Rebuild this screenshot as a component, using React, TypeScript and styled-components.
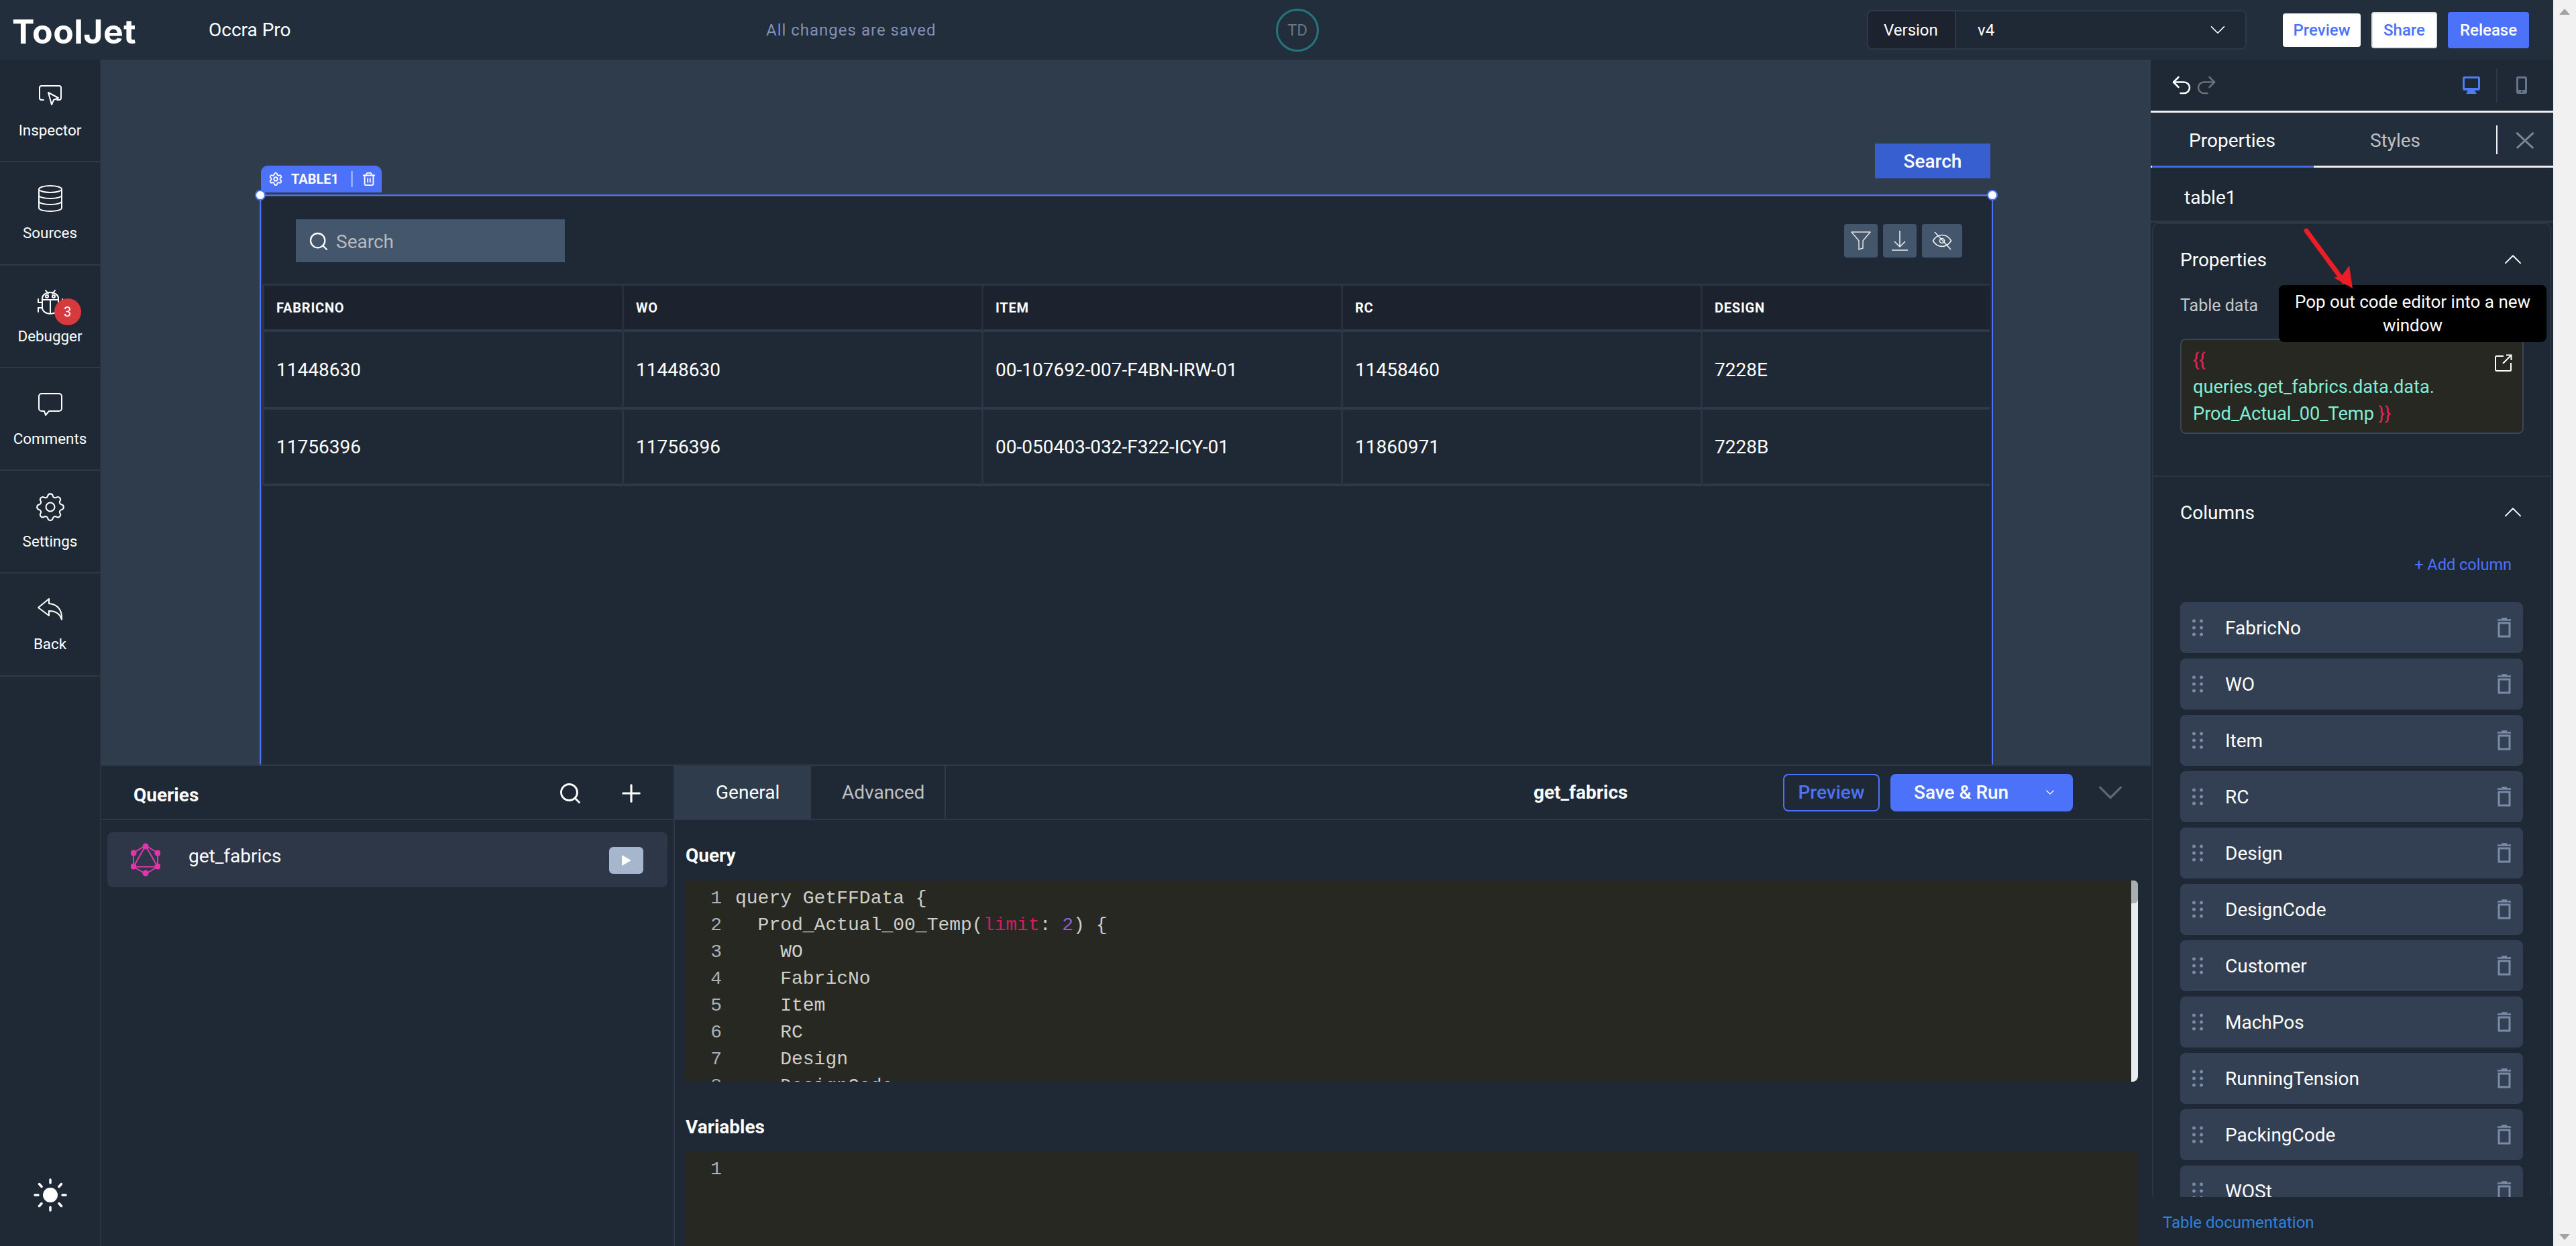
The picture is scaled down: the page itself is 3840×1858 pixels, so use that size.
import React from "react";
import styled, { createGlobalStyle } from "styled-components";
import { Plus, Redo2, Search as SearchIcon, Settings, Trash2, Undo2 } from "lucide-react";

const GlobalStyle = createGlobalStyle`
  html, body {
    margin: 0;
    padding: 0;
    background: #f1f1f1;
  }
  * {
    box-sizing: border-box;
  }
`;

const COLUMNS = ["FabricNo", "WO", "Item", "RC", "Design"];
const ROWS = [
  ["11448630", "11448630", "00-107692-007-F4BN-IRW-01", "11458460", "7228E"],
  ["11756396", "11756396", "00-050403-032-F322-ICY-01", "11860971", "7228B"],
];
const COLUMN_ITEMS = [
  "FabricNo",
  "WO",
  "Item",
  "RC",
  "Design",
  "DesignCode",
  "Customer",
  "MachPos",
  "RunningTension",
  "PackingCode",
  "WOSt",
];

const InspectorIcon = () => (
  <svg width="36" height="34" viewBox="0 0 36 34" fill="none" stroke="#fff" strokeWidth="2" strokeLinejoin="round" strokeLinecap="round">
    <path d="M8 23H5a3 3 0 0 1-3-3V5a3 3 0 0 1 3-3h26a3 3 0 0 1 3 3v15a3 3 0 0 1-3 3h-3" />
    <path d="M15 12l15 8-7 3-3 7z" fill="#1f2936" />
  </svg>
);

const SourcesIcon = () => (
  <svg width="38" height="42" viewBox="0 0 38 42" fill="none" stroke="#fff" strokeWidth="2">
    <ellipse cx="19" cy="7" rx="17" ry="5" />
    <path d="M2 7v28c0 3 8 5 17 5s17-2 17-5V7" />
    <path d="M2 16c0 3 8 5 17 5s17-2 17-5M2 25c0 3 8 5 17 5s17-2 17-5" />
  </svg>
);

const BugIcon = () => (
  <svg width="38" height="42" viewBox="0 0 38 42" fill="none" stroke="#fff" strokeWidth="2" strokeLinecap="round">
    <path d="M7 16a12 9 0 0 1 24 0v14a12 9 0 0 1-24 0z" />
    <path d="M7 18h24M19 18v20M12 4l4 5M26 4l-4 5M7 22H1v-5M31 22h6v-5M7 30H1v6M31 30h6v6" />
    <circle cx="14" cy="13" r="2" />
    <circle cx="24" cy="13" r="2" />
  </svg>
);

const CommentIcon = () => (
  <svg width="38" height="36" viewBox="0 0 38 36" fill="none" stroke="#fff" strokeWidth="2" strokeLinejoin="round">
    <path d="M6 2h26a4 4 0 0 1 4 4v18a4 4 0 0 1-4 4H17l-5 6-2-6H6a4 4 0 0 1-4-4V6a4 4 0 0 1 4-4z" />
  </svg>
);

const GearIcon = () => (
  <svg width="52" height="52" viewBox="0 0 24 24" fill="none" stroke="#fff" strokeWidth="0.95" strokeLinejoin="round">
    <path d="M10.300 4.300c.4-1.800 3-1.800 3.400 0a1.700 1.700 0 0 0 2.600 1.100c1.500-1 3.400.9 2.400 2.400a1.700 1.700 0 0 0 1.100 2.600c1.800.4 1.800 3 0 3.400a1.700 1.700 0 0 0-1.100 2.600c1 1.500-.9 3.400-2.400 2.400a1.700 1.700 0 0 0-2.600 1.100c-.4 1.800-3 1.800-3.400 0a1.700 1.700 0 0 0-2.600-1.100c-1.500 1-3.400-.9-2.400-2.400a1.700 1.700 0 0 0-1.100-2.600c-1.800-.4-1.800-3 0-3.400a1.700 1.700 0 0 0 1.100-2.600c-1-1.500.9-3.400 2.400-2.400a1.700 1.700 0 0 0 2.600-1.100z" />
    <circle cx="12" cy="12" r="3" />
  </svg>
);

const BackIcon = () => (
  <svg width="40" height="36" viewBox="0 0 40 36" fill="none" stroke="#fff" strokeWidth="2" strokeLinejoin="round">
    <path d="M18 2L2 15l16 12v-7c9 0 16 3 19 13 1-14-6-23-19-24z" />
  </svg>
);

const SunIcon = () => (
  <svg width="50" height="50" viewBox="0 0 50 50" fill="#fff" stroke="#fff" strokeWidth="3.500" strokeLinecap="round">
    <circle cx="25" cy="25" r="11" stroke="none" />
    <path d="M25 2v5M25 43v5M2 25h5M43 25h5M8.500 8.500l3.500 4M41.500 8.500l-3.500 4M8.500 41.500l3.500-4M41.500 41.500l-3.500-4" />
  </svg>
);

const FilterIcon = () => (
  <svg width="30" height="30" viewBox="0 0 30 30" fill="none" stroke="#e4e4e4" strokeWidth="1.500" strokeLinejoin="round">
    <path d="M1 2h28L18 15v11l-6 2V15z" />
  </svg>
);

const DownloadIcon = () => (
  <svg width="26" height="32" viewBox="0 0 26 32" fill="none" stroke="#f0f0f0" strokeWidth="1.500">
    <path d="M13 1v24M5 17l8 8 8-8M1 30h24" />
  </svg>
);

const EyeOffIcon = () => (
  <svg width="30" height="30" viewBox="0 0 30 30" fill="none" stroke="#f4f4f4" strokeWidth="1.500">
    <path d="M1.500 15C5 9 9.500 6.500 15 6.500S25 9 28.500 15C25 21 20.500 23.500 15 23.500S5 21 1.500 15z" />
    <circle cx="15" cy="15" r="3.500" />
    <path d="M4 2l24 26" />
  </svg>
);

const DesktopIcon = () => (
  <svg width="26" height="26" viewBox="0 0 26 26" fill="#4d7cf5">
    <path d="M3 0h20a3 3 0 0 1 3 3v15a3 3 0 0 1-3 3H3a3 3 0 0 1-3-3V3a3 3 0 0 1 3-3zm0 3v14h20V3z" fillRule="evenodd" />
    <path d="M8 21h10l3 5H5z" />
  </svg>
);

const PhoneIcon = () => (
  <svg width="16" height="26" viewBox="0 0 16 26" fill="#65758c">
    <path d="M3 0h10a3 3 0 0 1 3 3v20a3 3 0 0 1-3 3H3a3 3 0 0 1-3-3V3a3 3 0 0 1 3-3zm0 3v17h10V3zm5 18.500a1.300 1.300 0 1 0 0 2.600 1.300 1.300 0 0 0 0-2.600z" fillRule="evenodd" />
  </svg>
);

const GraphqlIcon = () => (
  <svg width="44" height="50" viewBox="0 0 44 50" fill="none" stroke="#e535ab" strokeWidth="2">
    <path d="M22 4L40 14.500v21L22 46 4 35.500v-21z" />
    <path d="M22 4L40 35.500H4z" />
    <g fill="#e535ab" stroke="none">
      <ellipse cx="22" cy="5" rx="4.500" ry="4.500" />
      <ellipse cx="40" cy="15" rx="4.500" ry="4.500" />
      <ellipse cx="40" cy="35" rx="4.500" ry="4.500" />
      <ellipse cx="22" cy="45" rx="4.500" ry="4.500" />
      <ellipse cx="4" cy="35" rx="4.500" ry="4.500" />
      <ellipse cx="4" cy="15" rx="4.500" ry="4.500" />
    </g>
  </svg>
);

const Chevron = ({ up, size = 28, color = "#fff", width = 2 }: { up?: boolean; size?: number; color?: string; width?: number }) => (
  <svg width={size} height={size * 0.6} viewBox="0 0 28 16" fill="none" stroke={color} strokeWidth={width} strokeLinecap="round" strokeLinejoin="round">
    <path d={up ? "M2 14L14 2l12 12" : "M2 2l12 12L26 2"} />
  </svg>
);

const ColumnTrash = () => (
  <svg width="20" height="30" viewBox="0 0 20 30" fill="none" stroke="#7a8ba6" strokeWidth="3">
    <path d="M2 8h16v20H2z" />
    <path d="M0 3.500h20M6 1.500h8" strokeWidth="2.500" />
  </svg>
);

const DragDots = () => (
  <svg width="16" height="28" viewBox="0 0 16 28" fill="#7a8ba6">
    <circle cx="2.500" cy="4" r="2.500" />
    <circle cx="13.500" cy="4" r="2.500" />
    <circle cx="2.500" cy="14" r="2.500" />
    <circle cx="13.500" cy="14" r="2.500" />
    <circle cx="2.500" cy="24" r="2.500" />
    <circle cx="13.500" cy="24" r="2.500" />
  </svg>
);

const PopOutIcon = () => (
  <svg width="26" height="26" viewBox="0 0 26 26" fill="none" stroke="#fff" strokeWidth="2">
    <path d="M13 3H3a2 2 0 0 0-2 2v18a2 2 0 0 0 2 2h20a1 1 0 0 0 1-1V13" />
    <path d="M12 14L24 2M17 1.500h7.500V9" />
  </svg>
);

const AnnotationArrow = () => (
  <ArrowSvg width="80" height="100" viewBox="0 0 80 100">
    <path d="M4 6L60 82" stroke="#ee1c25" strokeWidth="7" strokeLinecap="round" fill="none" />
    <path d="M73 92L45 76l12-3 11-15z" fill="#ee1c25" />
  </ArrowSvg>
);

const App = () => (
  <>
    <GlobalStyle />
    <Page>
      <Main>
        <Header>
          <Logo>ToolJet</Logo>
          <AppName>Occra Pro</AppName>
          <SavedNote>All changes are saved</SavedNote>
          <Avatar>TD</Avatar>
          <VersionBox>
            <VersionLabel>Version</VersionLabel>
            <VersionValue>
              v4
              <Chevron size={22} />
            </VersionValue>
          </VersionBox>
          <HeaderButton kind="preview">Preview</HeaderButton>
          <HeaderButton kind="share">Share</HeaderButton>
          <HeaderButton kind="release">Release</HeaderButton>
        </Header>

        <Body>
          <Sidebar>
            <SideItem>
              <SideIcon><InspectorIcon /></SideIcon>
              Inspector
            </SideItem>
            <SideItem>
              <SideIcon><SourcesIcon /></SideIcon>
              Sources
            </SideItem>
            <SideItem>
              <SideIcon>
                <BugIcon />
                <CountBadge>3</CountBadge>
              </SideIcon>
              Debugger
            </SideItem>
            <SideItem>
              <SideIcon><CommentIcon /></SideIcon>
              Comments
            </SideItem>
            <SideItem>
              <SideIcon><GearIcon /></SideIcon>
              Settings
            </SideItem>
            <SideItem>
              <SideIcon><BackIcon /></SideIcon>
              Back
            </SideItem>
            <SidebarFoot>
              <SunIcon />
            </SidebarFoot>
          </Sidebar>

          <Workspace>
            <Canvas>
              <CanvasButton>Search</CanvasButton>
              <WidgetFrame>
                <WidgetChip>
                  <Settings size={22} strokeWidth={2} />
                  <ChipName>TABLE1</ChipName>
                  <ChipRule />
                  <Trash2 size={22} strokeWidth={2} />
                </WidgetChip>
                <Handle side="left" />
                <Handle side="right" />
                <TableToolbar>
                  <TableSearch>
                    <SearchIcon size={32} strokeWidth={1.700} color="#fff" />
                    Search
                  </TableSearch>
                  <TableActions>
                    <ActionButton><FilterIcon /></ActionButton>
                    <ActionButton><DownloadIcon /></ActionButton>
                    <ActionButton wide><EyeOffIcon /></ActionButton>
                  </TableActions>
                </TableToolbar>
                <TableGrid>
                  {COLUMNS.map((name) => (
                    <HeadCell key={name}>{name}</HeadCell>
                  ))}
                  {ROWS.flat().map((value, i) => (
                    <DataCell key={i}>{value}</DataCell>
                  ))}
                </TableGrid>
              </WidgetFrame>
            </Canvas>

            <QueryPanel>
              <QueryList>
                <QueryListHead>
                  <QueryListTitle>Queries</QueryListTitle>
                  <SearchIcon size={36} strokeWidth={1.900} color="#fff" />
                  <Plus size={42} strokeWidth={1.800} color="#fff" />
                </QueryListHead>
                <QueryRow>
                  <GraphqlIcon />
                  <QueryName>get_fabrics</QueryName>
                  <RunButton />
                </QueryRow>
              </QueryList>

              <QueryDetail>
                <DetailHead>
                  <DetailTab active>General</DetailTab>
                  <DetailTab>Advanced</DetailTab>
                  <DetailTitle>get_fabrics</DetailTitle>
                  <OutlineButton>Preview</OutlineButton>
                  <SaveButton>
                    Save &amp; Run
                    <Chevron size={12} width={3} />
                  </SaveButton>
                  <CollapseToggle>
                    <Chevron size={36} color="#5f6775" width={2.500} />
                  </CollapseToggle>
                </DetailHead>
                <DetailBody>
                  <FieldLabel>Query</FieldLabel>
                  <QueryEditor>
                    <EditorText>
                      {"query GetFFData {"}
                      {"\n  Prod_Actual_00_Temp("}
                      <LimitWord>limit</LimitWord>
                      {": "}
                      <NumberWord>2</NumberWord>
                      {") {"}
                      {"\n    WO\n    FabricNo\n    Item\n    RC\n    Design\n    DesignCode"}
                    </EditorText>
                    <EditorGutter>{"1\n2\n3\n4\n5\n6\n7\n8"}</EditorGutter>
                    <EditorScrollbar>
                      <EditorThumb />
                    </EditorScrollbar>
                  </QueryEditor>
                  <FieldLabel second>Variables</FieldLabel>
                  <VariablesEditor>
                    <EditorGutter>1</EditorGutter>
                  </VariablesEditor>
                </DetailBody>
              </QueryDetail>
            </QueryPanel>
          </Workspace>

          <Inspector>
            <InspectorTop>
              <Undo2 size={36} strokeWidth={1.700} color="#fff" />
              <Redo2 size={36} strokeWidth={1.700} color="#6b6f76" />
              <DeviceGroup>
                <DesktopIcon />
                <DeviceRule />
                <PhoneIcon />
              </DeviceGroup>
            </InspectorTop>
            <InspectorTabs>
              <InspectorTab active>Properties</InspectorTab>
              <InspectorTab>Styles</InspectorTab>
              <TabsEnd>
                <CloseMark />
              </TabsEnd>
            </InspectorTabs>
            <ComponentName>table1</ComponentName>
            <InspectorScroll>
              <AccordionCard>
                <AccordionHead>
                  Properties
                  <Chevron up size={26} />
                </AccordionHead>
                <FieldCaption>Table data</FieldCaption>
                <CodeBox>
                  <PopOutSlot><PopOutIcon /></PopOutSlot>
                  <CodeBrace>{"{{"}</CodeBrace>
                  <br />
                  <CodeValue>
                    queries.get_fabrics.data.data.
                    <br />
                    Prod_Actual_00_Temp
                  </CodeValue>{" "}
                  <CodeBrace>{"}}"}</CodeBrace>
                </CodeBox>
              </AccordionCard>
              <ColumnsCard>
                <AccordionHead>
                  Columns
                  <Chevron up size={26} />
                </AccordionHead>
                <AddColumn>+ Add column</AddColumn>
                <ColumnList>
                  {COLUMN_ITEMS.map((name) => (
                    <ColumnRow key={name}>
                      <DragDots />
                      <ColumnName>{name}</ColumnName>
                      <ColumnTrash />
                    </ColumnRow>
                  ))}
                </ColumnList>
              </ColumnsCard>
            </InspectorScroll>
            <InspectorFooter>Table documentation</InspectorFooter>
            <AnnotationArrow />
            <Tooltip>Pop out code editor into a new window</Tooltip>
          </Inspector>
        </Body>
      </Main>
      <PageScrollbar>
        <ScrollArrow />
        <ScrollArrow down />
      </PageScrollbar>
    </Page>
  </>
);

export default App;

const Page = styled.div`
  display: flex;
  width: 3840px;
  height: 1858px;
  overflow: hidden;
  font-family: Roboto, "Liberation Sans", sans-serif;
  color: #fff;
`;

const Main = styled.div`
  flex: 1;
  min-width: 0;
  display: flex;
  flex-direction: column;
  background: #1f2936;
`;

const Header = styled.header`
  height: 89px;
  flex: none;
  display: flex;
  align-items: center;
  padding-right: 36px;
  background: #232e3c;
`;

const Logo = styled.div`
  width: 311px;
  padding-left: 18px;
  padding-top: 4px;
  font-family: Inter, sans-serif;
  font-weight: 700;
  font-size: 50px;
  letter-spacing: 0.5px;
  line-height: 1;
  color: #fff;
`;

const AppName = styled.div`
  width: 831px;
  font-size: 28px;
`;

const SavedNote = styled.div`
  width: 760px;
  font-size: 24px;
  letter-spacing: 1px;
  color: #8090b4;
`;

const Avatar = styled.div`
  width: 64px;
  height: 64px;
  display: flex;
  align-items: center;
  justify-content: center;
  border: 3px solid #25767c;
  border-radius: 50%;
  font-size: 24px;
  color: #6d7480;
`;

const VersionBox = styled.div`
  width: 566px;
  height: 59px;
  margin-left: auto;
  margin-right: 54px;
  display: flex;
  border: 2px solid #2d3849;
  border-radius: 8px;
  overflow: hidden;
  font-size: 24px;
`;

const VersionLabel = styled.div`
  width: 131px;
  display: flex;
  align-items: center;
  padding-left: 23px;
  background: #1c222e;
  border-right: 2px solid #2d3849;
`;

const VersionValue = styled.div`
  flex: 1;
  display: flex;
  align-items: center;
  justify-content: space-between;
  padding: 0 30px 0 32px;
  background: #1f2936;
`;

const HeaderButton = styled.button<{ kind: "preview" | "share" | "release" }>`
  width: ${({ kind }) => (kind === "preview" ? 116 : kind === "share" ? 98 : 121)}px;
  height: ${({ kind }) => (kind === "preview" ? 50 : 54)}px;
  margin-right: ${({ kind }) => (kind === "release" ? 0 : 16)}px;
  padding: 0;
  border: ${({ kind }) => (kind === "share" ? "2px solid #e0e0e0" : "none")};
  border-radius: 4px;
  background: ${({ kind }) => (kind === "release" ? "#4d72fa" : "#fff")};
  color: ${({ kind }) => (kind === "release" ? "#fff" : "#4d72fa")};
  font-family: inherit;
  font-size: 24px;
  font-weight: 500;
`;

const Body = styled.div`
  flex: 1;
  min-height: 0;
  display: flex;
`;

const Sidebar = styled.nav`
  width: 151px;
  flex: none;
  display: flex;
  flex-direction: column;
  background: #1f2936;
  border-right: 2px solid #2a3543;
`;

const SideItem = styled.div`
  height: 153.300px;
  flex: none;
  display: flex;
  flex-direction: column;
  align-items: center;
  border-bottom: 2px solid #2d3849;
  font-size: 22.400px;
  line-height: 28px;
`;

const SideIcon = styled.div`
  position: relative;
  height: 91px;
  padding-top: 17px;
  display: flex;
  align-items: center;
  justify-content: center;
`;

const CountBadge = styled.span`
  position: absolute;
  left: 25px;
  top: 49px;
  width: 40px;
  height: 40px;
  display: flex;
  align-items: center;
  justify-content: center;
  border-radius: 50%;
  background: #d63a3d;
  font-size: 20px;
  color: #fff;
`;

const SidebarFoot = styled.div`
  flex: 1;
  display: flex;
  align-items: flex-end;
  justify-content: center;
  padding-bottom: 51px;
`;

const Workspace = styled.div`
  flex: 1;
  min-width: 0;
  display: flex;
  flex-direction: column;
`;

const Canvas = styled.div`
  position: relative;
  height: 1051px;
  flex: none;
  overflow: hidden;
  background: #2f3c4c;
`;

const CanvasButton = styled.button`
  position: absolute;
  left: 2644px;
  top: 125px;
  width: 172px;
  height: 52px;
  border: none;
  padding: 0;
  background: #375fcf;
  color: #fff;
  font-family: inherit;
  font-size: 28px;
  font-weight: 500;
`;

const WidgetFrame = styled.div`
  position: absolute;
  left: 236px;
  top: 201px;
  width: 2584px;
  height: 900px;
  border: 2px solid #4d72fa;
  background: #1f2936;
  box-shadow: inset 2px 2px 0 #2d3849;
`;

const WidgetChip = styled.div`
  position: absolute;
  left: 0;
  top: -45px;
  width: 180px;
  height: 40px;
  display: flex;
  align-items: center;
  padding-left: 11px;
  border-radius: 10px 10px 0 0;
  background: #4d72fa;
`;

const ChipName = styled.span`
  margin-left: 12px;
  width: 89px;
  font-size: 20px;
  font-weight: 700;
`;

const ChipRule = styled.span`
  width: 3px;
  height: 24px;
  margin-right: 13px;
  background: #93a9fb;
`;

const Handle = styled.span<{ side: "left" | "right" }>`
  position: absolute;
  top: -9px;
  ${({ side }) => (side === "left" ? "left: -9px;" : "right: -9px;")}
  width: 16px;
  height: 16px;
  border: 2px solid #4d72fa;
  border-radius: 50%;
  background: #fff;
`;

const TableToolbar = styled.div`
  height: 131px;
  display: flex;
  align-items: center;
  justify-content: space-between;
  padding: 3px 44px 0 52px;
`;

const TableSearch = styled.div`
  width: 401px;
  height: 64px;
  display: flex;
  align-items: center;
  gap: 10px;
  padding-left: 18px;
  padding-top: 2px;
  background: #44566c;
  font-size: 28px;
  color: #b9b9b9;
`;

const TableActions = styled.div`
  display: flex;
  gap: 8px;
`;

const ActionButton = styled.div<{ wide?: boolean }>`
  width: ${({ wide }) => (wide ? 60 : 50)}px;
  height: 50px;
  display: flex;
  align-items: center;
  justify-content: center;
  border-radius: 4px;
  background: #44566c;
`;

const TableGrid = styled.div`
  display: grid;
  grid-template-columns: 536px 536px 536px 536px 428px;
  grid-template-rows: 69px 116px 114px;
  margin-left: 2px;
  width: 2575px;
  border-top: 3px solid #2a3442;
  border-left: 3px solid #2a3442;
`;

const HeadCell = styled.div`
  display: flex;
  align-items: center;
  padding-left: 18px;
  background: #1c222e;
  border-right: 3px solid #262f3c;
  border-bottom: 4px solid #2d3849;
  font-size: 20px;
  font-weight: 700;
  letter-spacing: 0.8px;
  text-transform: uppercase;
  &:nth-child(5) {
    border-right: none;
  }
`;

const DataCell = styled.div`
  display: flex;
  align-items: center;
  padding-left: 18px;
  border-right: 3px solid #2a3442;
  border-bottom: 4px solid #2d3849;
  font-size: 28px;
  &:nth-child(5n) {
    border-right: none;
  }
`;

const QueryPanel = styled.section`
  flex: 1;
  min-height: 0;
  display: flex;
  background: #1f2936;
  border-top: 2px solid #2d3849;
`;

const QueryList = styled.div`
  width: 855px;
  flex: none;
  border-right: 2px solid #2d3849;
`;

const QueryListHead = styled.div`
  height: 81px;
  display: flex;
  align-items: center;
  padding: 2px 42px 0 48px;
  border-bottom: 2px solid #2d3849;
  gap: 52px;
`;

const QueryListTitle = styled.div`
  flex: 1;
  padding-top: 6px;
  font-size: 28px;
  font-weight: 700;
`;

const QueryRow = styled.div`
  height: 82px;
  margin: 18px 9px 0;
  display: flex;
  align-items: center;
  padding-left: 35px;
  padding-right: 36px;
  border-radius: 8px;
  background: #2d3748;
`;

const QueryName = styled.div`
  flex: 1;
  margin-left: 42px;
  margin-top: -11px;
  font-size: 28px;
`;

const RunButton = styled.div`
  position: relative;
  width: 51px;
  height: 40px;
  margin-top: 1px;
  border-radius: 6px;
  background: #a6b6cc;
  &::after {
    content: "";
    position: absolute;
    left: 19px;
    top: 12px;
    border-left: 14px solid #fff;
    border-top: 8px solid transparent;
    border-bottom: 8px solid transparent;
  }
`;

const QueryDetail = styled.div`
  flex: 1;
  min-width: 0;
  display: flex;
  flex-direction: column;
`;

const DetailHead = styled.div`
  height: 81px;
  flex: none;
  display: flex;
  align-items: center;
  border-bottom: 2px solid #2d3849;
`;

const DetailTab = styled.div<{ active?: boolean }>`
  height: 100%;
  width: ${({ active }) => (active ? 203 : 201)}px;
  display: flex;
  align-items: center;
  padding-left: ${({ active }) => (active ? 61 : 46)}px;
  font-size: 28px;
  background: ${({ active }) => (active ? "#2f3c4c" : "transparent")};
  color: ${({ active }) => (active ? "#fff" : "#bfc0c2")};
  border-right: ${({ active }) => (active ? "none" : "2px solid #2d3849")};
`;

const DetailTitle = styled.div`
  width: 1016px;
  padding-left: 876px;
  margin-right: auto;
  white-space: nowrap;
  font-size: 28px;
  font-weight: 700;
`;

const OutlineButton = styled.button`
  width: 144px;
  height: 56px;
  margin-right: 16px;
  padding: 0;
  border: 2px solid #4d72fa;
  border-radius: 8px;
  background: transparent;
  color: #4d72fa;
  font-family: inherit;
  font-size: 28px;
  font-weight: 500;
`;

const SaveButton = styled.button`
  width: 272px;
  height: 56px;
  display: flex;
  align-items: center;
  justify-content: space-between;
  padding: 0 28px 0 35px;
  border: none;
  border-radius: 8px;
  background: #4d72fa;
  color: #fff;
  font-family: inherit;
  font-size: 28px;
  font-weight: 500;
`;

const CollapseToggle = styled.div`
  width: 116px;
  display: flex;
  justify-content: flex-end;
  padding-right: 42px;
`;

const DetailBody = styled.div`
  flex: 1;
  min-height: 0;
  padding-left: 16px;
`;

const FieldLabel = styled.div<{ second?: boolean }>`
  height: 34px;
  margin-top: ${({ second }) => (second ? 51 : 36)}px;
  margin-bottom: ${({ second }) => (second ? 19 : 20)}px;
  line-height: 34px;
  font-size: 28px;
  font-weight: 700;
`;

const QueryEditor = styled.div`
  position: relative;
  width: 2165px;
  height: 300px;
  overflow: hidden;
  background: #272822;
  font-family: "Liberation Mono", monospace;
  font-size: 28px;
  line-height: 40px;
`;

const VariablesEditor = styled(QueryEditor)`
  height: 142px;
`;

const EditorGutter = styled.pre`
  position: absolute;
  left: 0;
  top: 7px;
  width: 54px;
  margin: 0;
  font: inherit;
  text-align: right;
  color: #a9b1b8;
`;

const EditorText = styled.pre`
  margin: 7px 0 0 74px;
  font: inherit;
  color: #cfcfc8;
`;

const LimitWord = styled.span`
  color: #d81b60;
`;

const NumberWord = styled.span`
  color: #8a5cd6;
`;

const EditorScrollbar = styled.div`
  position: absolute;
  right: 0;
  top: 0;
  width: 10px;
  height: 100%;
  border-radius: 0 8px 8px 0;
  background: #e9ecef;
`;

const EditorThumb = styled.div`
  width: 10px;
  height: 34px;
  border-radius: 0 6px 6px 0;
  background: #a9aeb3;
`;

const Inspector = styled.aside`
  position: relative;
  width: 600px;
  flex: none;
  display: flex;
  flex-direction: column;
  background: #1f2936;
`;

const InspectorTop = styled.div`
  height: 79px;
  flex: none;
  display: flex;
  align-items: center;
  padding: 0 39px 0 28px;
  gap: 1px;
  border-bottom: 3px solid #f0f0f0;
`;

const DeviceGroup = styled.div`
  margin-left: auto;
  display: flex;
  align-items: center;
  gap: 24px;
  & > svg:last-child {
    margin-left: 4px;
  }
`;

const DeviceRule = styled.span`
  width: 2px;
  height: 51px;
  background: #2d3849;
`;

const InspectorTabs = styled.div`
  position: relative;
  height: 82px;
  flex: none;
  display: flex;
  background: #232e3c;
  border-bottom: 3px solid #f0f0f0;
`;

const InspectorTab = styled.div<{ active?: boolean }>`
  position: relative;
  width: ${({ active }) => (active ? 243 : 272)}px;
  display: flex;
  align-items: center;
  justify-content: center;
  padding-top: 4px;
  padding-right: ${({ active }) => (active ? 0 : 29)}px;
  font-size: 28px;
  color: ${({ active }) => (active ? "#fff" : "#bfc0c2")};
  ${({ active }) =>
    active &&
    `&::after {
      content: "";
      position: absolute;
      left: 2px;
      right: 0;
      bottom: -3px;
      height: 3px;
      background: #4169e1;
    }`}
`;

const TabsEnd = styled.div`
  flex: 1;
  margin: 19px 0 17px;
  border-left: 2px solid #f0f0f0;
  display: flex;
  align-items: center;
  padding-left: 28px;
`;

const CloseMark = styled.span`
  position: relative;
  width: 26px;
  height: 26px;
  &::before,
  &::after {
    content: "";
    position: absolute;
    left: -4px;
    top: 12px;
    width: 34px;
    height: 2.500px;
    background: #7a8699;
  }
  &::before {
    transform: rotate(43deg);
  }
  &::after {
    transform: rotate(-43deg);
  }
`;

const ComponentName = styled.div`
  height: 82px;
  flex: none;
  display: flex;
  align-items: center;
  padding-left: 50px;
  padding-top: 10px;
  font-size: 28px;
  border-bottom: 3px solid #2d3849;
`;

const InspectorScroll = styled.div`
  flex: 1;
  min-height: 0;
  overflow: hidden;
  padding: 0 3px 0 2px;
`;

const AccordionCard = styled.div`
  height: 379px;
  padding: 0 40px;
  border: 2px solid #2a3543;
  border-radius: 10px 10px 0 0;
`;

const ColumnsCard = styled.div`
  padding: 0 40px;
  border-left: 2px solid #2a3543;
  border-right: 2px solid #2a3543;
`;

const AccordionHead = styled.div`
  height: 106px;
  display: flex;
  align-items: center;
  justify-content: space-between;
  font-size: 28px;
  & > svg {
    margin-right: 2px;
  }
`;

const FieldCaption = styled.div`
  height: 30px;
  margin-top: 1px;
  line-height: 30px;
  font-size: 25px;
  color: #c4c8ce;
`;

const CodeBox = styled.div`
  position: relative;
  width: 512px;
  height: 142px;
  margin-top: 34px;
  padding: 10px 17px;
  border: 2px solid #3a4656;
  border-radius: 8px;
  background: #272822;
  font-size: 27.200px;
  line-height: 40px;
`;

const PopOutSlot = styled.span`
  position: absolute;
  right: 15px;
  top: 18px;
`;

const CodeBrace = styled.span`
  color: #e5255c;
`;

const CodeValue = styled.span`
  color: #82eed6;
`;

const AddColumn = styled.div`
  height: 34px;
  margin-top: 8px;
  padding-right: 17px;
  text-align: right;
  font-size: 23.500px;
  line-height: 34px;
  color: #4d72fa;
`;

const ColumnList = styled.div`
  margin-top: 39px;
  display: flex;
  flex-direction: column;
  gap: 8px;
`;

const ColumnRow = styled.div`
  height: 76px;
  flex: none;
  display: flex;
  align-items: center;
  padding: 0 18px;
  border-radius: 8px;
  background: #333f53;
`;

const ColumnName = styled.div`
  flex: 1;
  margin-left: 33px;
  font-size: 28px;
`;

const InspectorFooter = styled.div`
  height: 73px;
  flex: none;
  display: flex;
  align-items: center;
  padding-left: 18px;
  padding-top: 3px;
  font-size: 24px;
  color: #2f80dc;
`;

const ArrowSvg = styled.svg`
  position: absolute;
  left: 228px;
  top: 249px;
  z-index: 3;
`;

const Tooltip = styled.div`
  position: absolute;
  left: 191px;
  top: 336px;
  z-index: 2;
  width: 399px;
  height: 85px;
  padding: 8px 20px;
  border-radius: 8px;
  background: #000;
  text-align: center;
  font-size: 26px;
  line-height: 35px;
`;

const PageScrollbar = styled.div`
  width: 34px;
  flex: none;
  display: flex;
  flex-direction: column;
  justify-content: space-between;
  align-items: center;
  padding: 13px 0 9px;
  background: #f1f1f1;
`;

const ScrollArrow = styled.span<{ down?: boolean }>`
  width: 0;
  height: 0;
  border-left: 8px solid transparent;
  border-right: 8px solid transparent;
  ${({ down }) => (down ? "border-top: 9px solid #a3a3a3;" : "border-bottom: 9px solid #a3a3a3;")}
`;
